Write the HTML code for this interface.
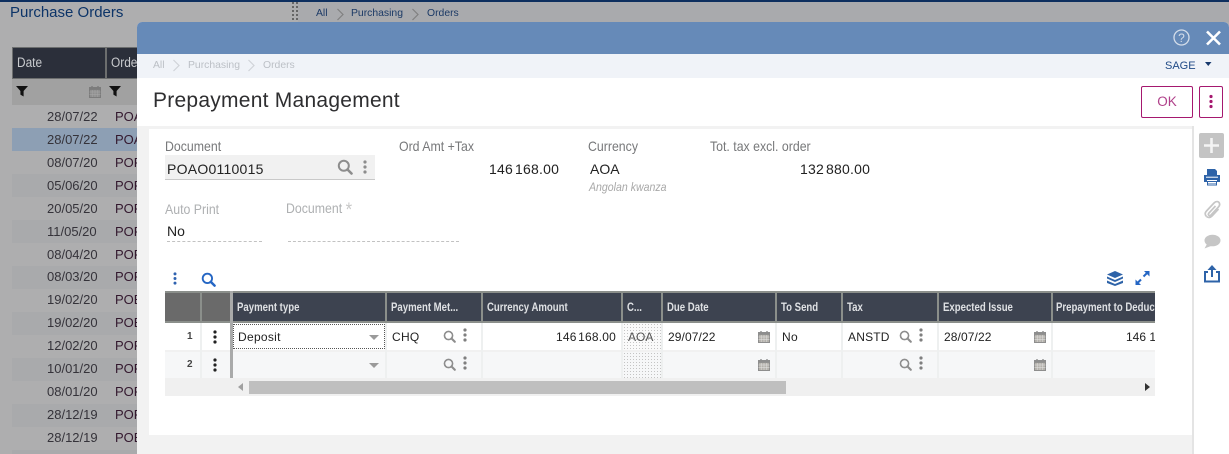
<!DOCTYPE html>
<html><head><meta charset="utf-8">
<style>
html,body{margin:0;padding:0;width:1229px;height:454px;overflow:hidden;background:#aeaeaf;font-family:"Liberation Sans",sans-serif}
.a{position:absolute;white-space:nowrap}
.box{position:absolute}
.c{position:absolute;white-space:nowrap;transform-origin:0 50%;transform:scaleX(.88)}
.lab{font-size:14px;color:#77787a;line-height:16px}
.lab2{font-size:14px;color:#aeb0b2;line-height:16px}
.h{color:#dfe1e4;font-size:12px;font-weight:bold;line-height:14px;transform:scaleX(.8)}
.v{font-size:12px;color:#222;line-height:14px}
svg{position:absolute;display:block}
</style></head><body>
<svg width="0" height="0" style="position:absolute">
<defs>
<symbol id="mag" viewBox="0 0 16 16"><circle cx="6.8" cy="6.8" r="5" fill="none" stroke="currentColor" stroke-width="2"/><path d="M10.5 10.5L14.5 14.5" stroke="currentColor" stroke-width="2.6" stroke-linecap="round"/></symbol>
<symbol id="cal" viewBox="0 0 12 12"><rect x=".5" y="1.5" width="11" height="10" fill="#b4b1ab" stroke="#8e8e8e"/><rect x=".5" y="1.5" width="11" height="2.4" fill="#8e8e8e"/><path d="M3 0v2.500M9 0v2.500" stroke="#8e8e8e" stroke-width="1.400"/><path d="M.5 6h11M.5 8.500h11M3.200 4v7M6 4v7M8.800 4v7" stroke="#e6e6e6" stroke-width=".5"/></symbol>
<symbol id="calb" viewBox="0 0 12 12"><rect x=".5" y="1.5" width="11" height="10" fill="#8f8f8f" stroke="#7c7c7c"/><rect x=".5" y="1.5" width="11" height="2.4" fill="#7c7c7c"/><path d="M3 0v2.500M9 0v2.500" stroke="#7c7c7c" stroke-width="1.400"/><path d="M.5 6h11M.5 8.500h11M3.200 4v7M6 4v7M8.800 4v7" stroke="#a8a8a8" stroke-width=".5"/></symbol>
<symbol id="dots" viewBox="0 0 4 14"><circle cx="2" cy="2" r="1.6" fill="currentColor"/><circle cx="2" cy="7" r="1.6" fill="currentColor"/><circle cx="2" cy="12" r="1.6" fill="currentColor"/></symbol>
<symbol id="fun" viewBox="0 0 12 12"><path d="M0 1h12L7.600 6v5.500L4.400 9.600V6z" fill="#111"/></symbol>
</defs></svg>

<!-- background page -->
<div class="box" style="left:0;top:0;width:1229px;height:2px;background:#0d2f5f"></div>
<div class="a" style="left:10px;top:4px;font-size:15px;line-height:18px;color:#0c3468">Purchase Orders</div>
<div class="box" style="left:298px;top:2px;width:931px;height:20px;background:#a9aaad"></div>
<svg style="left:292px;top:2px" width="7" height="18"><g fill="#666"><rect x="0" y="0" width="2" height="2"/><rect x="4" y="0" width="2" height="2"/><rect x="0" y="4" width="2" height="2"/><rect x="4" y="4" width="2" height="2"/><rect x="0" y="8" width="2" height="2"/><rect x="4" y="8" width="2" height="2"/><rect x="0" y="12" width="2" height="2"/><rect x="4" y="12" width="2" height="2"/><rect x="0" y="16" width="2" height="2"/><rect x="4" y="16" width="2" height="2"/></g></svg>
<div class="a" style="left:316px;top:8px;font-size:10.4px;line-height:12px;color:#1c3a66">All</div>
<svg style="left:336px;top:8px" width="9" height="13"><path d="M1.500 1l5.500 5.500-5.500 5.500" fill="none" stroke="#808080" stroke-width="1.200"/></svg>
<div class="a" style="left:351px;top:8px;font-size:10.4px;line-height:12px;color:#1c3a66">Purchasing</div>
<svg style="left:411px;top:8px" width="9" height="13"><path d="M1.500 1l5.500 5.500-5.500 5.500" fill="none" stroke="#808080" stroke-width="1.200"/></svg>
<div class="a" style="left:427px;top:8px;font-size:10.4px;line-height:12px;color:#1c3a66">Orders</div>

<div class="box" style="left:12px;top:47px;width:125px;height:32px;background:#2b2f3a"></div>
<div class="box" style="left:12px;top:47px;width:125px;height:1px;background:#6c6e6e"></div>
<div class="box" style="left:12px;top:78px;width:125px;height:1px;background:#6c6e6e"></div>
<div class="box" style="left:105px;top:47px;width:2px;height:32px;background:#6c6e6e"></div>
<div class="box" style="left:12px;top:47px;width:1px;height:32px;background:#6c6e6e"></div>
<div class="c" style="left:17px;top:55px;font-size:13.500px;line-height:16px;color:#c9cbce">Date</div>
<div class="c" style="left:111px;top:55px;font-size:13.500px;line-height:16px;color:#c9cbce">Orde</div>
<div class="box" style="left:12px;top:79px;width:125px;height:26px;background:#a1a1a1"></div>
<svg style="left:16px;top:85px" width="12" height="12"><use href="#fun"/></svg>
<svg style="left:109px;top:85px" width="12" height="12"><use href="#fun"/></svg>
<svg style="left:89px;top:86px" width="12" height="12"><use href="#calb"/></svg>

<div class="box" style="left:12px;top:128px;width:125px;height:23px;background:#8d9fb4"></div>
<div class="box" style="left:12px;top:174px;width:125px;height:23px;background:#a9aaac"></div>
<div class="box" style="left:12px;top:220px;width:125px;height:23px;background:#a9aaac"></div>
<div class="box" style="left:12px;top:266px;width:125px;height:23px;background:#a9aaac"></div>
<div class="box" style="left:12px;top:312px;width:125px;height:23px;background:#a9aaac"></div>
<div class="box" style="left:12px;top:358px;width:125px;height:23px;background:#a9aaac"></div>
<div class="box" style="left:12px;top:404px;width:125px;height:23px;background:#a9aaac"></div>
<div class="box" style="left:12px;top:450px;width:125px;height:4px;background:#a9aaac"></div>
<div style="position:absolute;left:0;top:106px;font-size:13px;line-height:22.92px;color:#35333a;width:137px;overflow:hidden;height:348px">
<div class="a" style="left:47px;top:0;width:60px">28/07/22<br>28/07/22<br>08/07/20<br>05/06/20<br>20/05/20<br>11/05/20<br>08/04/20<br>08/03/20<br>19/02/20<br>19/02/20<br>12/02/20<br>10/01/20<br>08/01/20<br>28/12/19<br>28/12/19</div>
<div class="a" style="left:115px;top:0;color:#33182e">POA<br>POA<br>POF<br>POF<br>POF<br>POF<br>POF<br>POF<br>POE<br>POE<br>POF<br>POF<br>POF<br>POP<br>POE</div>
</div>

<!-- modal -->
<div class="box" style="left:137px;top:22px;width:1092px;height:432px;background:#f2f2f2;border-radius:5px 5px 0 0;overflow:hidden">
<div class="box" style="left:0;top:0;width:1092px;height:32px;background:#668ab8"></div>
<div class="box" style="left:0;top:32px;width:1092px;height:24px;background:#f0f3f8"></div>
<div class="box" style="left:0;top:56px;width:1092px;height:48px;background:#fff"></div>
<div class="box" style="left:12px;top:107px;width:1043px;height:306px;background:#fff"></div>
<div class="box" style="left:1055px;top:104px;width:37px;height:328px;background:#fff;border-left:2px solid #e4e4e4;box-sizing:border-box"></div>
</div>

<svg style="left:1173px;top:29px" width="17" height="17"><circle cx="8.500" cy="8.500" r="7.500" fill="none" stroke="#d5deea" stroke-width="1.300"/><text x="8.500" y="12.800" text-anchor="middle" font-family="Liberation Sans" font-size="12" fill="#d5deea">?</text></svg>
<svg style="left:1205px;top:30px" width="17" height="16"><path d="M2 1.500l13 13M15 1.500l-13 13" stroke="#fff" stroke-width="2.600"/></svg>

<div class="a" style="left:153px;top:60px;font-size:10.4px;line-height:12px;color:#bcc0c6">All</div>
<svg style="left:172px;top:59px" width="9" height="13"><path d="M1.500 1l5.500 5.500-5.500 5.500" fill="none" stroke="#d0d3d8" stroke-width="1.200"/></svg>
<div class="a" style="left:188px;top:60px;font-size:10.4px;line-height:12px;color:#bcc0c6">Purchasing</div>
<svg style="left:247px;top:59px" width="9" height="13"><path d="M1.500 1l5.500 5.500-5.500 5.500" fill="none" stroke="#d0d3d8" stroke-width="1.200"/></svg>
<div class="a" style="left:263px;top:60px;font-size:10.4px;line-height:12px;color:#bcc0c6">Orders</div>
<div class="a" style="left:1165px;top:59px;font-size:11px;line-height:14px;color:#1f4a86">SAGE</div>
<svg style="left:1205px;top:62px" width="7" height="5"><path d="M0 0h6.500L3.250 4z" fill="#17396d"/></svg>

<div class="a" style="left:153px;top:88px;font-size:21px;line-height:26px;color:#2e2e30;letter-spacing:.25px">Prepayment Management</div>
<div class="box" style="left:1141px;top:86px;width:52px;height:32px;border:1px solid #a5186f;border-radius:2px;box-sizing:border-box;text-align:center;font-size:13.500px;line-height:30px;color:#b0408a">OK</div>
<div class="box" style="left:1199px;top:86px;width:24px;height:32px;border:1px solid #a5186f;border-radius:2px;box-sizing:border-box"></div>
<svg style="left:1209px;top:94px;color:#a5186f" width="4" height="15"><use href="#dots"/></svg>

<!-- right rail -->
<div class="box" style="left:1199px;top:133px;width:25px;height:25px;background:#c4c4c4;border-radius:2px"></div>
<svg style="left:1203px;top:137px" width="17" height="17"><path d="M8.500 1v15M1 8.500h15" stroke="#f4f4f4" stroke-width="2.600"/></svg>
<svg style="left:1203px;top:168px" width="18" height="18" viewBox="0 0 18 18"><path d="M4 1h8l2 2v4H4z" fill="#2e63a8"/><path d="M1 7h16v7h-3v-2H4v2H1z" fill="#2e63a8"/><rect x="4" y="13" width="10" height="4.500" fill="#2e63a8"/><path d="M5 14.500h8M5 16h8" stroke="#fff"/><rect x="3" y="8.700" width="12" height="1" fill="#fff"/></svg>
<svg style="left:1203px;top:200px" width="18" height="19" viewBox="0 0 18 19"><path d="M3.500 16.500C1.500 14.500 2 12.500 3.500 11L11 3C13 1 15.800 1 16.500 3.500C17 5 16 6.500 15 7.500L8 15C6.500 16.500 4.500 15 5.800 13.200L12.500 6" fill="none" stroke="#c6c6c6" stroke-width="1.700"/><path d="M3.500 16.500C5.500 18 7.500 17.500 9 16L15.500 9" fill="none" stroke="#c6c6c6" stroke-width="1.700"/></svg>
<svg style="left:1203px;top:234px" width="18" height="15" viewBox="0 0 18 15"><ellipse cx="9.500" cy="6.500" rx="8" ry="5.800" fill="#c6c6c6"/><path d="M4 10L1.500 14.500L8 12z" fill="#c6c6c6"/></svg>
<svg style="left:1203px;top:264px" width="18" height="19" viewBox="0 0 18 19"><path d="M5 8H2v9.500h14V8h-3" fill="none" stroke="#2e63a8" stroke-width="2"/><path d="M9 13V3" stroke="#2e63a8" stroke-width="2"/><path d="M4.500 6L9 1l4.500 5z" fill="#2e63a8"/></svg>

<!-- form -->
<div class="c lab" style="left:165px;top:138px">Document</div>
<div class="c lab" style="left:399px;top:138px">Ord Amt +Tax</div>
<div class="c lab" style="left:588px;top:138px">Currency</div>
<div class="c lab" style="left:710px;top:138px">Tot. tax excl. order</div>

<div class="box" style="left:165px;top:155px;width:210px;height:25px;background:#f1f1f1;border-bottom:1px solid #c9c9c9;box-sizing:border-box"></div>
<div class="a" style="left:167px;top:161px;font-size:14px;line-height:16px;color:#222;letter-spacing:.25px">POAO0110015</div>
<svg style="left:337px;top:159px;color:#8d8d8d" width="16" height="16"><use href="#mag"/></svg>
<svg style="left:363px;top:160px;color:#8d8d8d" width="4" height="14"><use href="#dots"/></svg>
<div class="a" style="left:489px;top:161px;font-size:14px;line-height:16px;color:#222;word-spacing:-2px;letter-spacing:.2px">146 168.00</div>
<div class="a" style="left:590px;top:161px;font-size:14px;line-height:16px;color:#222">AOA</div>
<div class="a" style="left:800px;top:161px;font-size:14px;line-height:16px;color:#222;word-spacing:-2px;letter-spacing:.2px">132 880.00</div>
<div class="c" style="left:589px;top:180px;font-size:12px;line-height:14px;color:#a8a8a8;font-style:italic">Angolan kwanza</div>

<div class="c lab2" style="left:165px;top:201px">Auto Print</div>
<div class="c lab2" style="left:286px;top:200px">Document <span style="color:#c8c8c8;font-size:19px;line-height:14px;vertical-align:-3px">*</span></div>
<div class="a" style="left:167px;top:223px;font-size:14px;line-height:16px;color:#222">No</div>
<div class="box" style="left:167px;top:241px;width:95px;border-top:1px dashed #c2c2c2"></div>
<div class="box" style="left:288px;top:241px;width:171px;border-top:1px dashed #c2c2c2"></div>

<!-- grid toolbar -->
<svg style="left:173px;top:272px;color:#2f62b0" width="4" height="13"><use href="#dots"/></svg>
<svg style="left:201px;top:272px;color:#2566c4" width="15" height="15"><use href="#mag"/></svg>
<svg style="left:1107px;top:271px" width="16" height="15" viewBox="0 0 16 15"><path d="M8 0l8 3.500L8 7 0 3.500z" fill="#2e63a8"/><path d="M0 5.500L8 9l8-3.500V7.500L8 11 0 7.500z" fill="#2e63a8"/><path d="M0 9.500L8 13l8-3.500V12L8 15 0 12z" fill="#2e63a8"/></svg>
<svg style="left:1135px;top:270px" width="15" height="16" viewBox="0 0 15 16"><path d="M9 1h5.500v5.500z" fill="#2566c4"/><path d="M13 2L8.500 6.500" stroke="#2566c4" stroke-width="2"/><path d="M.5 15V9.500L6 15z" fill="#2566c4"/><path d="M1.500 14L6 9.500" stroke="#2566c4" stroke-width="2"/></svg>

<!-- grid -->
<div class="box" style="left:165px;top:291px;width:990px;height:105px;background:#f1f1f1;overflow:hidden">
<div class="box" style="left:0;top:0;width:990px;height:32px;background:#3d4350;border-top:2px solid #8b8f8b;border-bottom:2px solid #8b8f8b;box-sizing:border-box"></div>
<div class="box" style="left:0;top:0;width:65px;height:32px;background:#6a6a6a;border-top:2px solid #8b8f8b;border-bottom:2px solid #8b8f8b;box-sizing:border-box"></div>
<div class="box" style="left:0;top:32px;width:990px;height:27px;background:#fff"></div>
<div class="box" style="left:0;top:59px;width:990px;height:2px;background:#f1f1f1"></div>
<div class="box" style="left:0;top:61px;width:990px;height:26px;background:#f6f7f8"></div>
<div class="box" style="left:0;top:87px;width:990px;height:18px;background:#f0f0f0"></div>

<div class="box" style="left:35px;top:0;width:2px;height:87px;background:#eef0f0"></div>
<div class="box" style="left:35px;top:0;width:2px;height:32px;background:#8b8f8b"></div>
<div class="box" style="left:65px;top:0;width:3px;height:87px;background:#a9aaaa"></div>
<div class="box" style="left:220px;top:0;width:2px;height:87px;background:#eef0f0"></div>
<div class="box" style="left:220px;top:0;width:2px;height:32px;background:#8b8f8b"></div>
<div class="box" style="left:316px;top:0;width:2px;height:87px;background:#eef0f0"></div>
<div class="box" style="left:316px;top:0;width:2px;height:32px;background:#8b8f8b"></div>
<div class="box" style="left:456px;top:0;width:2px;height:87px;background:#eef0f0"></div>
<div class="box" style="left:456px;top:0;width:2px;height:32px;background:#8b8f8b"></div>
<div class="box" style="left:496px;top:0;width:2px;height:87px;background:#eef0f0"></div>
<div class="box" style="left:496px;top:0;width:2px;height:32px;background:#8b8f8b"></div>
<div class="box" style="left:610px;top:0;width:2px;height:87px;background:#eef0f0"></div>
<div class="box" style="left:610px;top:0;width:2px;height:32px;background:#8b8f8b"></div>
<div class="box" style="left:676px;top:0;width:2px;height:87px;background:#eef0f0"></div>
<div class="box" style="left:676px;top:0;width:2px;height:32px;background:#8b8f8b"></div>
<div class="box" style="left:772px;top:0;width:2px;height:87px;background:#eef0f0"></div>
<div class="box" style="left:772px;top:0;width:2px;height:32px;background:#8b8f8b"></div>
<div class="box" style="left:886px;top:0;width:2px;height:87px;background:#eef0f0"></div>
<div class="box" style="left:886px;top:0;width:2px;height:32px;background:#8b8f8b"></div>

<!-- C.. readonly dotted cells -->
<div class="box" style="left:458px;top:32px;width:38px;height:27px;background:radial-gradient(circle,#c4c4c4 .55px,transparent .7px) 0 0/3px 3px #fafafa"></div>
<div class="box" style="left:458px;top:61px;width:38px;height:26px;background:radial-gradient(circle,#c4c4c4 .55px,transparent .7px) 0 0/3px 3px #f6f7f8"></div>

<div class="box" style="left:68px;top:33px;width:152px;height:25px;border:1px dotted #555;box-sizing:border-box"></div>

<!-- scrollbar -->
<div class="box" style="left:84px;top:90px;width:537px;height:13px;background:#bfbfbf"></div>
<svg style="left:73px;top:92px" width="6" height="9"><path d="M5 0v8L0 4z" fill="#a0a0a0"/></svg>
<svg style="left:980px;top:92px" width="6" height="9"><path d="M0 0v8l5-4z" fill="#333"/></svg>
</div>

<!-- headers -->
<div class="c h" style="left:237px;top:300px">Payment type</div>
<div class="c h" style="left:391px;top:300px">Payment Met...</div>
<div class="c h" style="left:487px;top:300px">Currency Amount</div>
<div class="c h" style="left:627px;top:300px">C...</div>
<div class="c h" style="left:667px;top:300px">Due Date</div>
<div class="c h" style="left:781px;top:300px">To Send</div>
<div class="c h" style="left:847px;top:300px">Tax</div>
<div class="c h" style="left:943px;top:300px">Expected Issue</div>
<div class="box" style="left:1053px;top:300px;width:102px;height:14px;overflow:hidden"><div class="c h" style="left:3px;top:0">Prepayment to Deduct</div></div>

<!-- row numbers + dots -->
<div class="a" style="left:187px;top:331px;font-size:10px;line-height:12px;color:#444;font-weight:bold">1</div>
<div class="a" style="left:187px;top:359px;font-size:10px;line-height:12px;color:#444;font-weight:bold">2</div>
<svg style="left:213px;top:330px;color:#222" width="4" height="14"><use href="#dots"/></svg>
<svg style="left:213px;top:358px;color:#222" width="4" height="14"><use href="#dots"/></svg>

<!-- row 1 -->
<div class="a v" style="left:238px;top:330px;letter-spacing:.3px">Deposit</div>
<svg style="left:369px;top:335px" width="10" height="6"><path d="M0 0h10L5 5z" fill="#9a9a9a"/></svg>
<div class="a v" style="left:392px;top:330px;letter-spacing:.3px">CHQ</div>
<svg style="left:443px;top:330px;color:#8d8d8d" width="13" height="13"><use href="#mag"/></svg>
<svg style="left:463px;top:328px;color:#7f7f7f" width="4" height="14"><use href="#dots"/></svg>
<div class="a v" style="left:556px;top:330px;word-spacing:-2px;letter-spacing:.2px">146 168.00</div>
<div class="a v" style="left:628px;top:330px;color:#555">AOA</div>
<div class="a v" style="left:668px;top:330px;letter-spacing:.1px">29/07/22</div>
<svg style="left:758px;top:331px" width="12" height="12"><use href="#cal"/></svg>
<div class="a v" style="left:782px;top:330px;letter-spacing:.3px">No</div>
<div class="a v" style="left:848px;top:330px;letter-spacing:.2px">ANSTD</div>
<svg style="left:899px;top:330px;color:#8d8d8d" width="13" height="13"><use href="#mag"/></svg>
<svg style="left:919px;top:328px;color:#7f7f7f" width="4" height="14"><use href="#dots"/></svg>
<div class="a v" style="left:944px;top:330px;letter-spacing:.1px">28/07/22</div>
<svg style="left:1034px;top:331px" width="12" height="12"><use href="#cal"/></svg>
<div class="box" style="left:1060px;top:330px;width:95px;height:14px;overflow:hidden"><div class="a v" style="left:66px;top:0">146 168.00</div></div>

<!-- row 2 -->
<svg style="left:369px;top:363px" width="10" height="6"><path d="M0 0h10L5 5z" fill="#9a9a9a"/></svg>
<svg style="left:443px;top:358px;color:#8d8d8d" width="13" height="13"><use href="#mag"/></svg>
<svg style="left:463px;top:356px;color:#7f7f7f" width="4" height="14"><use href="#dots"/></svg>
<svg style="left:758px;top:359px" width="12" height="12"><use href="#cal"/></svg>
<svg style="left:899px;top:358px;color:#8d8d8d" width="13" height="13"><use href="#mag"/></svg>
<svg style="left:919px;top:356px;color:#7f7f7f" width="4" height="14"><use href="#dots"/></svg>
<svg style="left:1034px;top:359px" width="12" height="12"><use href="#cal"/></svg>
</body></html>
